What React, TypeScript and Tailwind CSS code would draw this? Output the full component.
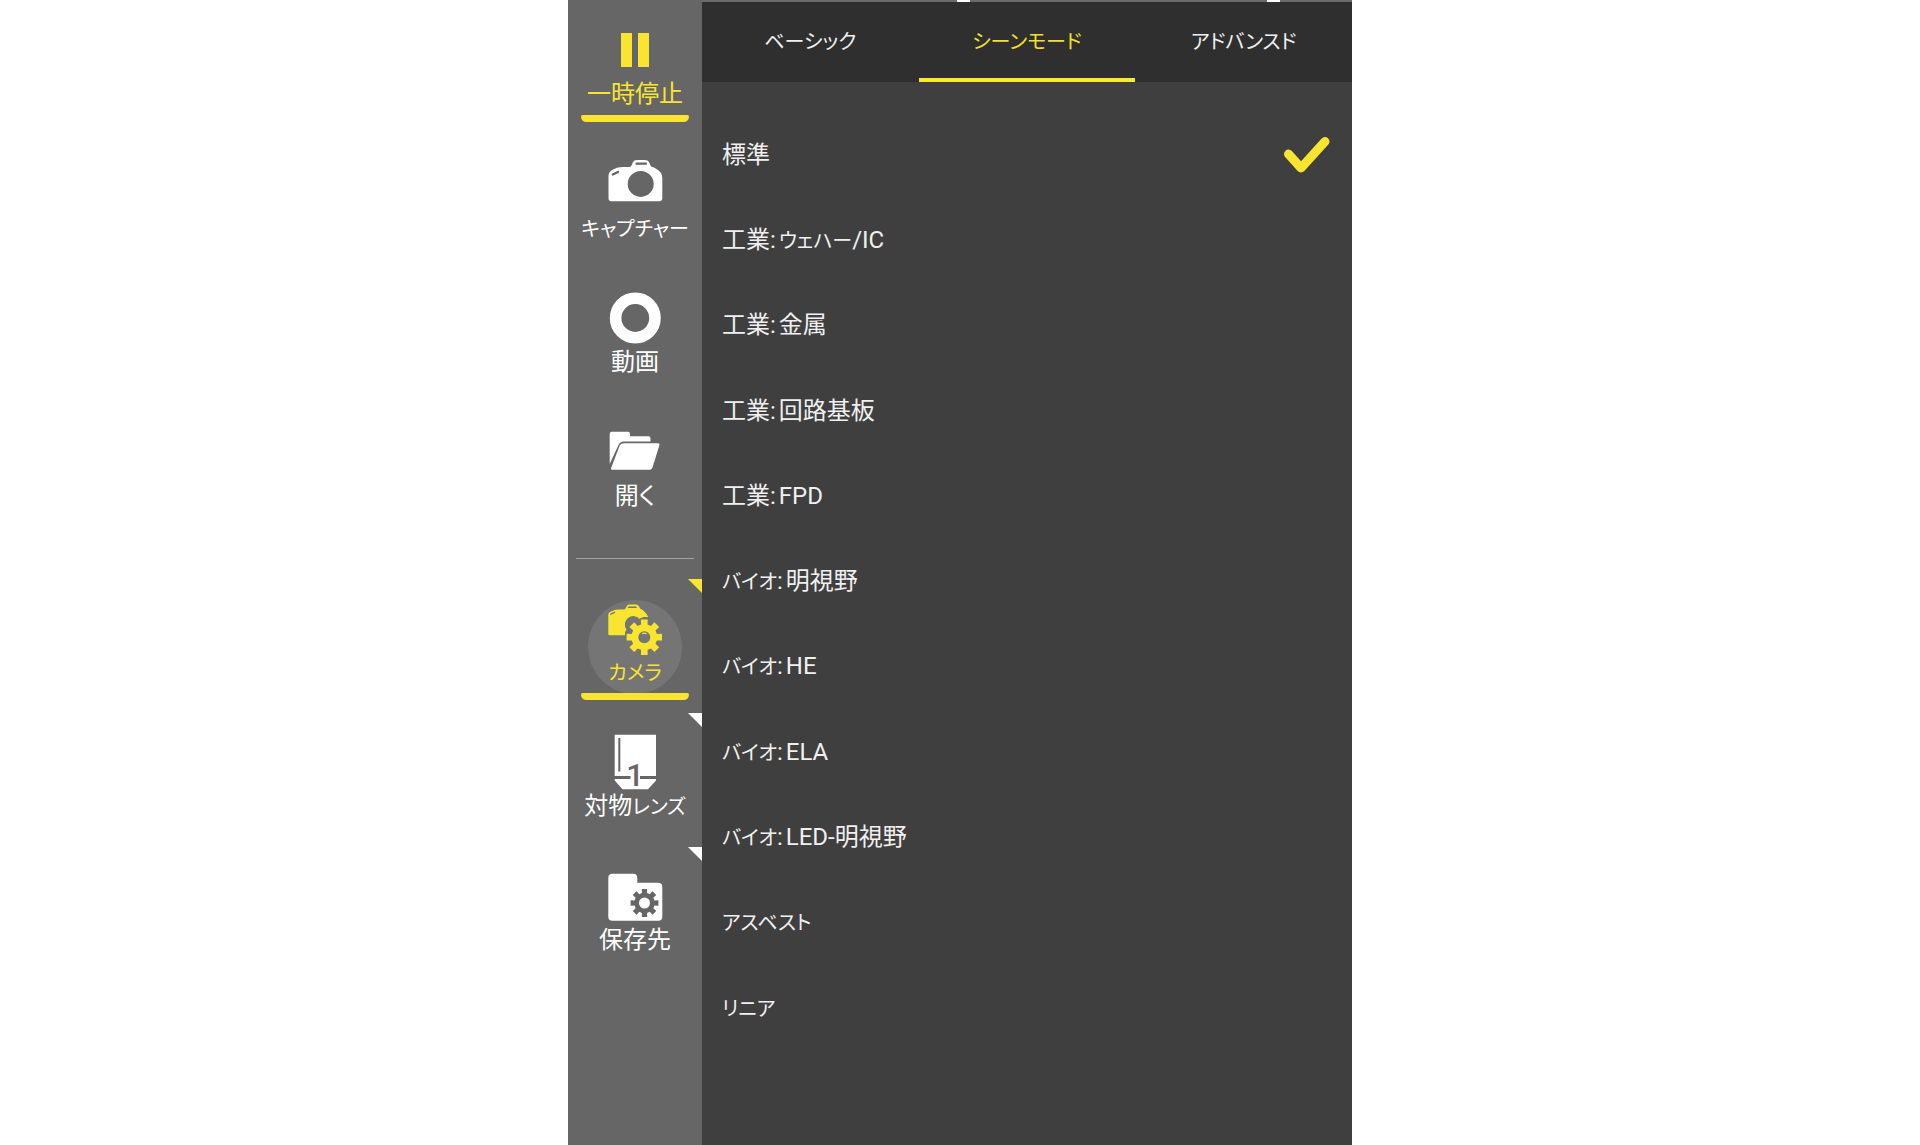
import { useState } from "react";
import type { ReactNode } from "react";

const BG = "#666666";

function gearPath(cx: number, cy: number, outer: number, root: number, hole: number) {
  const teeth = 8;
  const points: string[] = [];
  for (let i = 0; i < teeth; i++) {
    const mid = (i * 2 * Math.PI) / teeth - Math.PI / 2;
    const corners: [number, number][] = [
      [-0.25, root],
      [-0.19, outer],
      [0.19, outer],
      [0.25, root],
    ];
    for (const [offset, r] of corners) {
      points.push(`${(cx + r * Math.cos(mid + offset)).toFixed(2)} ${(cy + r * Math.sin(mid + offset)).toFixed(2)}`);
    }
  }
  return `M${points.join("L")}ZM${cx - hole} ${cy}a${hole} ${hole} 0 1 0 ${hole * 2} 0a${hole} ${hole} 0 1 0 ${-hole * 2} 0Z`;
}

function Icon({ children }: { children: ReactNode }) {
  return (
    <svg viewBox="0 0 56 56" className="relative size-14 shrink-0 overflow-visible" fill="currentColor" aria-hidden="true">
      {children}
    </svg>
  );
}

const PauseIcon = () => (
  <Icon>
    <rect x="14" y="11" width="11" height="34" />
    <rect x="31" y="11" width="11" height="34" />
  </Icon>
);

const CameraIcon = () => (
  <Icon>
    <path d="M4.5 45.3Q1.5 45.3 1.5 42.3V20Q1.5 16 5 14L10 11.8Q12.5 11 17 11H22Q24 11 25 8.5L26 6Q27 4 30 4H38Q41 4 42 6L44 10.5Q50 12 54 17Q55.3 19 55.3 22V42.3Q55.3 45.3 52.3 45.3Z" />
    <circle cx="33.7" cy="27.9" r="13" fill={BG} />
    <path d="M5.8 18.6L11 16M29.5 7.7H39" stroke={BG} strokeWidth="2.2" strokeLinecap="round" />
  </Icon>
);

const RecordIcon = () => (
  <Icon>
    <circle cx="28.3" cy="28" r="19.7" fill="none" stroke="currentColor" strokeWidth="11.6" />
  </Icon>
);

const FolderOpenIcon = () => (
  <Icon>
    <path d="M2.7 40V9.7Q2.7 7.7 4.7 7.7H21Q23 7.7 23 9.7V12.2H41.5Q43.5 12.2 43.5 14.5V17.4H17Q13 17.4 11.5 21Z" />
    <path d="M17.5 19.2H51Q53 19.2 52.3 21.5L45.5 43.5Q44.7 45.8 42.5 45.8H5.5Q3.5 45.8 4.3 43.5L12.5 22Q13.5 19.2 17.5 19.2Z" />
  </Icon>
);

const CameraGearIcon = () => (
  <Icon>
    <path d="M2.8 35.3Q1.3 35.3 1.3 33.8V14.5Q1.3 12.8 3 12L7.5 10Q9 9.5 11 9.5H16.5Q18 9.5 18.8 8L19.5 6.5Q20.3 4.5 22.5 4.5H29Q31 4.5 32 6.3L33 8.5Q38 10.5 41.3 17H36L33 19.5A8.2 8.2 0 1 0 19.5 29.5L18.2 32V35.3Z" />
    <path d="M3.8 14.2L7.5 12.4M21.5 7.2H29" stroke="#757575" strokeWidth="1.5" strokeLinecap="round" />
    <path fillRule="evenodd" stroke="#757575" strokeWidth="3" paintOrder="stroke" strokeLinejoin="round" d={gearPath(37.3, 37.2, 18, 13, 6)} />
    <path d="M35 33.6Q37.3 32.6 39.6 33.6" fill="none" stroke="currentColor" strokeWidth="1.3" />
  </Icon>
);

const ObjectiveIcon = () => (
  <Icon>
    <path d="M7.7 .8H49V42H7.7ZM7.7 45H49V46.5L41 55.3H15.5L7.7 46.5Z" />
    <path d="M12.3 4V37.5" stroke={BG} strokeWidth="2" />
    <rect x="23.5" y="36" width="9.5" height="19" />
    <text x="28" y="52.3" textAnchor="middle" fontSize="31" fontWeight="500" fontFamily="Roboto, sans-serif" fill={BG}>
      1
    </text>
  </Icon>
);

const FolderGearIcon = () => (
  <Icon>
    <path d="M5.3 5.7H26Q30.3 5.7 30.3 10V14.8H51Q55.3 14.8 55.3 19V48.7Q55.3 52.7 51.3 52.7H5.3Q1.3 52.7 1.3 48.7V9.7Q1.3 5.7 5.3 5.7Z" />
    <path fillRule="evenodd" fill={BG} d={gearPath(37.5, 35, 14.2, 10.3, 5.5)} />
  </Icon>
);

/* Katakana runs are set one size smaller than kanji and Latin; colons get a little air. */
function Label({ text }: { text: string }) {
  const parts = text.split(/([\u30a0-\u30ff]+|:)/).filter(Boolean);
  return (
    <span className="text-2xl leading-[30px] whitespace-nowrap">
      {parts.map((part, i) => {
        if (part === ":") return <span key={i} className="mr-[3px]">:</span>;
        if (/^[\u30a0-\u30ff]/.test(part)) return <span key={i} className="text-xl leading-[30px]">{part}</span>;
        return part;
      })}
    </span>
  );
}

type Tool = { label: string; icon: ReactNode; active?: boolean; halo?: boolean; menu?: boolean };

const captureTools: Tool[] = [
  { label: "一時停止", icon: <PauseIcon />, active: true },
  { label: "キャプチャー", icon: <CameraIcon /> },
  { label: "動画", icon: <RecordIcon /> },
  { label: "開く", icon: <FolderOpenIcon /> },
];

const settingTools: Tool[] = [
  { label: "カメラ", icon: <CameraGearIcon />, active: true, halo: true, menu: true },
  { label: "対物レンズ", icon: <ObjectiveIcon />, menu: true },
  { label: "保存先", icon: <FolderGearIcon />, menu: true },
];

function ToolButton({ label, icon, active, halo, menu }: Tool) {
  return (
    <button
      type="button"
      className={`relative flex h-[134px] w-full flex-col items-center pt-[22px] ${active ? "text-[#f9e52f]" : "text-white"}`}
    >
      {halo && <span className="absolute top-[22px] size-[94px] rounded-full bg-[#757575]" />}
      {menu && (
        <svg viewBox="0 0 14 14" className="absolute top-px right-0 size-3.5" fill="currentColor" aria-hidden="true">
          <path d="M0 0H14V14Z" />
        </svg>
      )}
      {icon}
      <span className="relative mt-px flex h-[30px] items-center">
        <Label text={label} />
      </span>
      {active && <span className="relative mt-1.5 h-[7px] w-[108px] rounded-b-md rounded-t-xs bg-[#f9e52f]" />}
    </button>
  );
}

const tabs = ["ベーシック", "シーンモード", "アドバンスド"];

const scenes = [
  "標準",
  "工業:ウェハー/IC",
  "工業:金属",
  "工業:回路基板",
  "工業:FPD",
  "バイオ:明視野",
  "バイオ:HE",
  "バイオ:ELA",
  "バイオ:LED-明視野",
  "アスベスト",
  "リニア",
];

export default function App() {
  const [tab, setTab] = useState(1);
  const [scene, setScene] = useState(0);

  return (
    <div className="min-h-screen bg-white">
      <div className="mx-auto flex min-h-screen max-w-[784px] font-['Roboto','Noto_Sans_CJK_JP',sans-serif] [font-feature-settings:'palt']">
        <aside className="w-[134px] shrink-0 bg-[#666666]">
          {captureTools.map((tool) => (
            <ToolButton key={tool.label} {...tool} />
          ))}
          <hr className="mx-2 mt-[22px] mb-[19px] border-[#a3a3a3]" />
          {settingTools.map((tool) => (
            <ToolButton key={tool.label} {...tool} />
          ))}
        </aside>

        <main className="flex min-w-0 flex-1 flex-col bg-[#3f3f3f] text-[#f0f0f0]">
          <div className="grid h-0.5 grid-cols-[255px_13px_297px_13px_1fr] bg-[#6b6b6b]">
            <span />
            <span className="bg-white" />
            <span />
            <span className="bg-white" />
          </div>
          <div role="tablist" className="grid h-20 grid-cols-3 bg-[#2f2f2f]">
            {tabs.map((name, i) => (
              <button
                key={name}
                type="button"
                role="tab"
                aria-selected={i === tab}
                onClick={() => setTab(i)}
                className={`border-b-4 pt-0.5 ${i === tab ? "border-[#f9ea2c] text-[#f2e12c]" : "border-transparent"}`}
              >
                <Label text={name} />
              </button>
            ))}
          </div>

          <div role="radiogroup" aria-label="シーンモード" className="grid flex-1 auto-rows-fr pt-[30px] pb-[94px]">
            {scenes.map((name, i) => (
              <label key={name} className="flex items-center justify-between px-5">
                <input type="radio" name="scene" className="sr-only" checked={i === scene} onChange={() => setScene(i)} />
                <Label text={name} />
                {i === scene && (
                  <svg viewBox="0 0 48 40" className="h-10 w-12" fill="none" aria-hidden="true">
                    <path d="M4.5 19L17 33L41 6.5" stroke="#f9e52f" strokeWidth="9" strokeLinecap="round" strokeLinejoin="round" />
                  </svg>
                )}
              </label>
            ))}
          </div>
        </main>
      </div>
    </div>
  );
}
